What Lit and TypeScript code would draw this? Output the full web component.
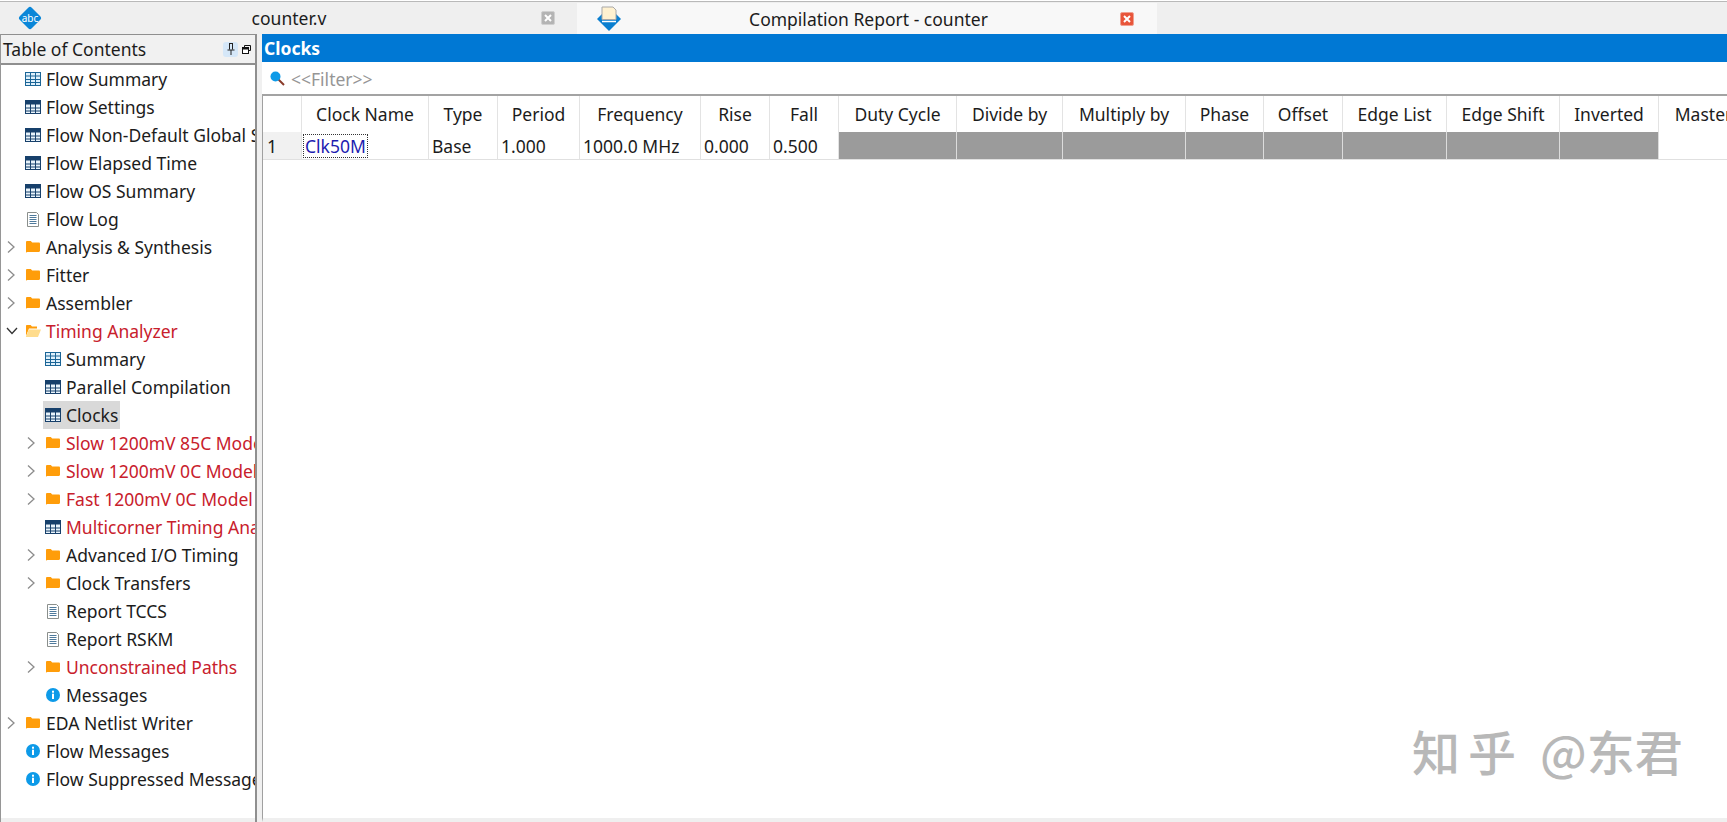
import {css, html, LitElement, svg} from 'lit';
import {customElement} from 'lit/decorators.js';

type Kind = 'grid' | 'table' | 'doc' | 'folder' | 'open' | 'info';

interface TreeRow {
  label: string;
  icon: Kind;
  depth?: number;
  arrow?: 'closed' | 'open';
  red?: boolean;
  selected?: boolean;
}

const TREE: TreeRow[] = [
  {label: 'Flow Summary', icon: 'grid'},
  {label: 'Flow Settings', icon: 'table'},
  {label: 'Flow Non-Default Global Settings', icon: 'table'},
  {label: 'Flow Elapsed Time', icon: 'table'},
  {label: 'Flow OS Summary', icon: 'table'},
  {label: 'Flow Log', icon: 'doc'},
  {label: 'Analysis & Synthesis', icon: 'folder', arrow: 'closed'},
  {label: 'Fitter', icon: 'folder', arrow: 'closed'},
  {label: 'Assembler', icon: 'folder', arrow: 'closed'},
  {label: 'Timing Analyzer', icon: 'open', arrow: 'open', red: true},
  {label: 'Summary', icon: 'grid', depth: 1},
  {label: 'Parallel Compilation', icon: 'table', depth: 1},
  {label: 'Clocks', icon: 'table', depth: 1, selected: true},
  {label: 'Slow 1200mV 85C Model', icon: 'folder', depth: 1, arrow: 'closed', red: true},
  {label: 'Slow 1200mV 0C Model', icon: 'folder', depth: 1, arrow: 'closed', red: true},
  {label: 'Fast 1200mV 0C Model', icon: 'folder', depth: 1, arrow: 'closed', red: true},
  {label: 'Multicorner Timing Analysis', icon: 'table', depth: 1, red: true},
  {label: 'Advanced I/O Timing', icon: 'folder', depth: 1, arrow: 'closed'},
  {label: 'Clock Transfers', icon: 'folder', depth: 1, arrow: 'closed'},
  {label: 'Report TCCS', icon: 'doc', depth: 1},
  {label: 'Report RSKM', icon: 'doc', depth: 1},
  {label: 'Unconstrained Paths', icon: 'folder', depth: 1, arrow: 'closed', red: true},
  {label: 'Messages', icon: 'info', depth: 1},
  {label: 'EDA Netlist Writer', icon: 'folder', arrow: 'closed'},
  {label: 'Flow Messages', icon: 'info'},
  {label: 'Flow Suppressed Messages', icon: 'info'},
];

const HEADERS = ['', 'Clock Name', 'Type', 'Period', 'Frequency', 'Rise', 'Fall', 'Duty Cycle', 'Divide by',
  'Multiply by', 'Phase', 'Offset', 'Edge List', 'Edge Shift', 'Inverted', 'Master'];

const icons: Record<Kind, unknown> = {
  grid: svg`<svg width="16" height="14" viewBox="0 0 16 14"><rect x=".5" y=".5" width="15" height="13" fill="#dff0fb" stroke="#1b6596"/><path d="M.5 4h15M.5 7.5h15M.5 10.5h15M5.5 1v12M10.5 1v12" stroke="#1b6596" fill="none"/></svg>`,
  table: svg`<svg width="16" height="14" viewBox="0 0 16 14"><rect x=".5" y=".5" width="15" height="13" fill="#e8f3fb" stroke="#17406b"/><rect width="16" height="4.5" fill="#17406b"/><path d="M.5 8h15M.5 11h15M5.5 4v9M10.5 4v9" stroke="#17406b" fill="none"/></svg>`,
  doc: svg`<svg width="16" height="15" viewBox="0 0 16 15"><path d="M2.500.5h9l2 2v12h-11z" fill="#fff" stroke="#8a8f8c"/><path d="M4.500 3.500h7M4.500 5.500h7M4.500 7.500h7M4.500 9.500h7M4.500 11.500h7" stroke="#4f7a9c" fill="none"/></svg>`,
  folder: svg`<svg width="16" height="14" viewBox="0 0 16 14"><path d="M1 2.200C1 1.500 1.500 1 2.200 1h3.600l1.400 1.600h6.600c.7 0 1.200.5 1.200 1.200v7c0 .7-.5 1.200-1.200 1.200H2.200C1.500 13 1 12.500 1 11.800z" fill="#ff9d0a"/></svg>`,
  open: svg`<svg width="16" height="14" viewBox="0 0 16 14"><path d="M1 2c0-.6.4-1 1-1h3.600l1.400 1.500h5v2H4L1 12z" fill="#ff9d0a"/><path d="M3.800 5.500H16L13 13H.8z" fill="#ffdc8c"/></svg>`,
  info: svg`<svg width="16" height="14" viewBox="0 0 16 14"><circle cx="8" cy="7" r="7" fill="#0d9ae8"/><rect x="7" y="2.700" width="2" height="2" fill="#fff"/><rect x="7" y="5.700" width="2" height="5.300" fill="#fff"/></svg>`,
};

@customElement('app-root')
export class AppRoot extends LitElement {
  renderRow(row: TreeRow) {
    const classes = `row ${row.depth ? 'nested' : ''} ${row.red ? 'red' : ''}`;
    return html`
      <div class=${classes}>
        <span class="arrow">
          ${row.arrow === 'closed'
            ? svg`<svg width="10" height="14" viewBox="0 0 10 14"><path d="M2 1.500 8 7l-6 5.500" fill="none" stroke="#8c8c8c" stroke-width="1.300"/></svg>`
            : row.arrow === 'open'
              ? svg`<svg width="12" height="10" viewBox="0 0 12 10"><path d="M1 2l5 5.500L11 2" fill="none" stroke="#333" stroke-width="1.300"/></svg>`
              : ''}
        </span>
        <span class="label ${row.selected ? 'selected' : ''}">
          <span class="icon">${icons[row.icon]}</span>
          <span>${row.label}</span>
        </span>
      </div>
    `;
  }

  render() {
    return html`
      <div class="tabs">
        <div class="tab">
          <svg class="tab-icon" width="24" height="24" viewBox="0 0 24 24">
            <rect x="3.500" y="3.500" width="17" height="17" rx="2.500" transform="rotate(45 12 12)" fill="#0a86d8"/>
            <text x="12" y="15.500" text-anchor="middle" font-size="10" font-family="Noto Sans" fill="#fff">abc</text>
          </svg>
          <span class="tab-title">counter.v</span>
          <span class="close muted">
            <svg width="8" height="8" viewBox="0 0 8 8"><path d="M1 1l6 6M7 1 1 7" stroke="#fff" stroke-width="2"/></svg>
          </span>
        </div>
        <div class="tab active">
          <svg class="tab-icon" width="26" height="25" viewBox="0 0 26 25">
            <path d="M13 1 25 13 13 25 1 13z" fill="#0a7fd0"/>
            <path d="M6 1h11l3 3v9.500H6z" fill="#fff1d0" stroke="#a8a8a8"/>
            <path d="M6 15.500h14" stroke="#fff" stroke-width="1.500"/>
          </svg>
          <span class="tab-title">Compilation Report - counter</span>
          <span class="close danger">
            <svg width="8" height="8" viewBox="0 0 8 8"><path d="M1 1l6 6M7 1 1 7" stroke="#fff" stroke-width="2"/></svg>
          </span>
        </div>
      </div>
      <div class="body">
        <aside class="sidebar">
          <header class="toc-head">
            <span class="toc-title">Table of Contents</span>
            <span class="pin">
              <svg width="10" height="12" viewBox="0 0 10 12"><path d="M3 .5h4M3.500 1v5.500M6.500 1v5.500M1.500 7h7M5 7v5" stroke="#222" fill="none"/></svg>
            </span>
            <svg class="restore" width="9" height="9" viewBox="0 0 9 9"><path d="M2.500 2V.5h6v5H7" fill="none" stroke="#111"/><rect x=".5" y="2.500" width="6" height="6" fill="#fff" stroke="#111"/><path d="M.5 3.500h6" stroke="#111" stroke-width="2"/></svg>
          </header>
          <div class="tree">${TREE.map((row) => this.renderRow(row))}</div>
        </aside>
        <div class="splitter"></div>
        <main class="main">
          <div class="title">Clocks</div>
          <div class="filter">
            <svg width="15" height="15" viewBox="0 0 15 15"><path d="M8.500 8.500 14 14" stroke="#8a3b2a" stroke-width="2"/><circle cx="5.500" cy="5.500" r="5" fill="#0d9ae8"/></svg>
            <span>&lt;&lt;Filter&gt;&gt;</span>
          </div>
          <div class="sheet">
            <div class="grid">
              ${HEADERS.map((text) => html`<div class="head">${text}</div>`)}
              <div class="cell index">1</div>
              <div class="cell"><span class="link">Clk50M</span></div>
              <div class="cell">Base</div>
              <div class="cell">1.000</div>
              <div class="cell">1000.0 MHz</div>
              <div class="cell">0.000</div>
              <div class="cell">0.500</div>
              ${HEADERS.slice(7, 15).map(() => html`<div class="cell off"></div>`)}
              <div class="cell"></div>
            </div>
          </div>
        </main>
      </div>
      <div class="mark"><span class="mark-a">知乎</span><span class="mark-b">@东君</span></div>
    `;
  }

  static styles = css`
    :host {
      display: flex;
      flex-direction: column;
      position: relative;
      width: 100%;
      height: 822px;
      overflow: hidden;
      background: #fff;
      color: #1c1c1c;
      font-family: "Noto Sans", sans-serif;
      font-size: 17.5px;
    }

    .tabs {
      display: flex;
      flex: none;
      height: 31px;
      padding-top: 2px;
      background: #efefef;
      border-top: 1px solid #fff;
      box-shadow: inset 0 1px 0 #b9b9b9;
    }

    .tab {
      display: flex;
      align-items: center;
      width: 577px;
      box-sizing: border-box;
      padding: 0 22px 2px 18px;
    }

    .tab.active {
      width: 580px;
      padding: 2px 23px 2px 19px;
      background: #f8f8f8;
    }

    .tab-icon { flex: none; }

    .tab-title {
      flex: 1;
      padding-right: 5px;
      text-align: center;
      white-space: nowrap;
    }

    .close {
      display: flex;
      align-items: center;
      justify-content: center;
      width: 14px;
      height: 14px;
      box-sizing: border-box;
      border-radius: 2px;
    }

    .muted { background: #b4b4b4; border: 1px solid #d0d0d0; }
    .danger { background: #e8553a; border: 1px solid #f0a090; }

    .body {
      display: flex;
      flex: 1;
      min-height: 0;
    }

    .sidebar {
      display: flex;
      flex-direction: column;
      flex: none;
      width: 257px;
      box-sizing: border-box;
      border-left: 1px solid #969696;
      border-right: 2px solid #8f8f8f;
    }

    .toc-head {
      display: flex;
      align-items: center;
      flex: none;
      height: 28px;
      padding-left: 2px;
      background: #f1f1f1;
      border-top: 1px solid #8f8f8f;
      border-bottom: 2px solid #8f8f8f;
    }

    .toc-title { flex: 1; }

    .pin {
      display: flex;
      align-items: center;
      justify-content: center;
      width: 15px;
      height: 15px;
      margin-right: 4px;
      background: #d5e7f8;
      border-radius: 3px;
    }

    .restore { margin-right: 4px; }

    .tree {
      flex: 1;
      overflow: hidden;
      border-bottom: 4px solid #efefef;
    }

    .row {
      display: flex;
      align-items: center;
      height: 28px;
      padding-left: 3px;
      white-space: nowrap;
    }

    .row.nested { padding-left: 23px; }
    .row.red { color: #c8202c; }

    .arrow {
      display: flex;
      align-items: center;
      flex: none;
      width: 19px;
      padding-left: 2px;
      box-sizing: border-box;
    }

    .label {
      display: flex;
      align-items: center;
      height: 28px;
      padding: 0 2px;
    }

    .label.selected { background: #d9d9d9; }

    .icon {
      display: flex;
      flex: none;
      width: 21px;
    }

    .splitter {
      flex: none;
      width: 5px;
      background: #f0f0f0;
    }

    .main {
      display: flex;
      flex-direction: column;
      flex: 1;
      min-width: 0;
    }

    .title {
      flex: none;
      height: 28px;
      line-height: 28px;
      padding-left: 2px;
      background: #0078d4;
      color: #fff;
      font-weight: 700;
    }

    .filter {
      display: flex;
      align-items: center;
      flex: none;
      gap: 6px;
      height: 31px;
      padding: 1px 0 0 8px;
      color: #969696;
      border-bottom: 2px solid #a3a3a3;
    }

    .sheet {
      flex: 1;
      overflow: hidden;
      border-left: 1px solid #a0a0a0;
      border-bottom: 4px solid #efefef;
    }

    .grid {
      display: grid;
      grid-template-columns: 39px 127px 69px 82px 121px 69px 69px 118px 106px 123px 78px 79px 104px 113px 99px 90px;
      grid-template-rows: 36px 28px;
      width: max-content;
    }

    .head {
      display: flex;
      align-items: center;
      justify-content: center;
      box-sizing: border-box;
      border-right: 1px solid #e3e3e3;
      white-space: nowrap;
    }

    .head:last-of-type { border-right: 0; }

    .cell {
      display: flex;
      align-items: center;
      padding-left: 3px;
      box-sizing: border-box;
      border-right: 1px solid #e3e3e3;
      border-bottom: 1px solid #e0e0e0;
      white-space: nowrap;
    }

    .index { background: #f1f1f1; padding-left: 4px; }

    .off { background: #9b9b9b; border-right-color: #dcdcdc; }

    .link {
      padding: 0 1px;
      margin-left: -1px;
      line-height: 22px;
      color: #1d1db0;
      outline: 1px dotted #333;
    }

    .mark {
      position: absolute;
      left: 1412px;
      top: 717px;
      display: flex;
      gap: 16px;
      color: #b8b8b8;
      font-family: "Noto Sans CJK SC", sans-serif;
      font-size: 48px;
      font-weight: 500;
      line-height: 66px;
    }

    .mark-a { letter-spacing: 8px; }
  `;
}
